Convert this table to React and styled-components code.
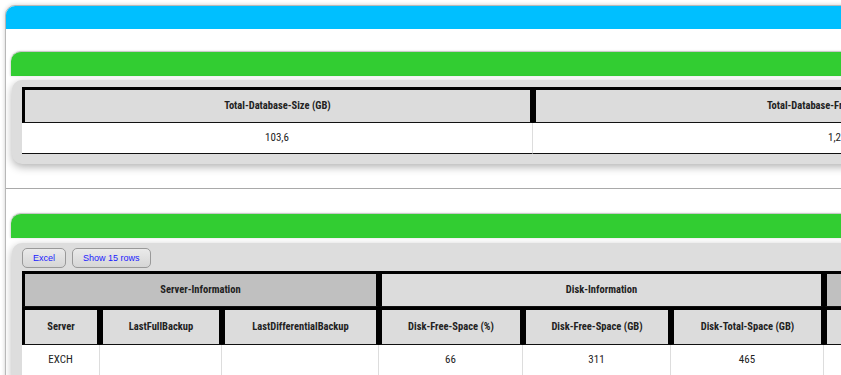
import React from "react";
import styled, { createGlobalStyle } from "styled-components";

const GlobalStyle = createGlobalStyle`
  html, body {
    margin: 0;
    padding: 0;
    background: #fff;
    overflow: hidden;
  }
  body {
    font-family: "Roboto Condensed", "Liberation Sans Narrow", Roboto, sans-serif;
    color: #222;
  }
`;

// report data ------------
const summary = {
  columns: [
    { label: "Total-Database-Size (GB)", width: 511 },
    { label: "Total-Database-Free-Space (GB)", width: 604 },
    { label: "Total-Mailbox-Count", width: 420 },
  ],
  row: ["103,6", "1,2", "12"],
};

const groups = [
  { label: "Server-Information", span: 3, dark: true },
  { label: "Disk-Information", span: 3, dark: false },
  { label: "Database-Information", span: 3, dark: true },
];

const serverColumns = [
  { label: "Server", width: 78 },
  { label: "LastFullBackup", width: 122 },
  { label: "LastDifferentialBackup", width: 157 },
  { label: "Disk-Free-Space (%)", width: 144 },
  { label: "Disk-Free-Space (GB)", width: 148 },
  { label: "Disk-Total-Space (GB)", width: 153 },
  { label: "Database-Count", width: 140 },
  { label: "Database-Size (GB)", width: 150 },
  { label: "Mounted", width: 120 },
];

const serverRows = [["EXCH", "", "", "66", "311", "465", "1", "103,6", "True"]];

function App() {
  return (
    <>
      <GlobalStyle />
      <Page>
        <Report>
          <ReportHeader />

          <Section>
            <Panel>
              <PanelHeader />
              <TableBox $gap={4}>
                <DataTable>
                  <colgroup>
                    {summary.columns.map((c) => (
                      <Col key={c.label} $w={c.width} />
                    ))}
                  </colgroup>
                  <thead>
                    <tr>
                      {summary.columns.map((c) => (
                        <HeadCell key={c.label}>{c.label}</HeadCell>
                      ))}
                    </tr>
                  </thead>
                  <tbody>
                    <tr>
                      {summary.row.map((v, i) => (
                        <Cell key={i}>{v}</Cell>
                      ))}
                    </tr>
                  </tbody>
                </DataTable>
              </TableBox>
            </Panel>
          </Section>

          <Section $divided>
            <Panel>
              <PanelHeader />
              <TableBox $gap={5} $top={5}>
                <Buttons>
                  <TableButton>Excel</TableButton>
                  <TableButton>Show 15 rows</TableButton>
                </Buttons>
                <DataTable>
                  <colgroup>
                    {serverColumns.map((c) => (
                      <Col key={c.label} $w={c.width} />
                    ))}
                  </colgroup>
                  <thead>
                    <tr>
                      {groups.map((g) => (
                        <HeadCell key={g.label} colSpan={g.span} $dark={g.dark}>
                          {g.label}
                        </HeadCell>
                      ))}
                    </tr>
                    <tr>
                      {serverColumns.map((c) => (
                        <HeadCell key={c.label} $sortable>
                          {c.label}
                        </HeadCell>
                      ))}
                    </tr>
                  </thead>
                  <tbody>
                    {serverRows.map((row) => (
                      <tr key={row[0]}>
                        {row.map((v, i) => (
                          <Cell key={i}>{v}</Cell>
                        ))}
                      </tr>
                    ))}
                  </tbody>
                </DataTable>
              </TableBox>
            </Panel>
          </Section>
        </Report>
      </Page>
    </>
  );
}

const Page = styled.div`
  padding: 5px;
  width: 1900px;
`;

const Report = styled.div`
  border: 1px solid #b8b8b8;
  border-radius: 10px 10px 0 0;
  box-shadow: 0 0 4px rgba(0, 0, 0, 0.2);
  background: #fff;
  overflow: hidden;
`;

const ReportHeader = styled.div`
  height: 23px;
  background-color: #00bfff;
`;

const Section = styled.div`
  padding: ${(p) => (p.$divided ? "24px" : "22px")} 0 24px 5px;
  border-top: ${(p) => (p.$divided ? "1px solid #a9a9a9" : "none")};
`;

const Panel = styled.div`
  display: flex;
  flex-direction: column;
`;

const PanelHeader = styled.div`
  height: 24px;
  background-color: #32cd32;
  border-top: 1px solid #c8c8c8;
  border-radius: 10px 10px 0 0;
  box-shadow: -1px 0 2px rgba(0, 0, 0, 0.15);
`;

const TableBox = styled.div`
  margin: ${(p) => p.$gap}px 0 0 1px;
  padding: ${(p) => p.$top || 7}px 10px 10px 10px;
  background-color: #dddddd;
  border-radius: 10px;
  box-shadow: 0 3px 8px rgba(0, 0, 0, 0.3);
`;

const Buttons = styled.div`
  display: flex;
  gap: 6px;
  margin-bottom: 3px;
`;

const TableButton = styled.button`
  height: 20px;
  padding: 0 10px;
  border: 1px solid #999;
  border-radius: 5px;
  background: linear-gradient(to bottom, #eaeaea 0%, #d6d6d6 100%);
  color: #1a1aff;
  font-family: "Liberation Sans", Arial, sans-serif;
  font-size: 9px;
  cursor: pointer;
`;

const DataTable = styled.table`
  table-layout: fixed;
  border-collapse: separate;
  border-spacing: 0;
  background: #fff;
`;

const Col = styled.col`
  width: ${(p) => p.$w}px;
`;

const HeadCell = styled.th`
  padding: ${(p) => (p.$sortable ? "10px" : "9px")} 6px;
  background-color: ${(p) => (p.$dark ? "#c0c0c0" : "#dcdcdc")};
  border: 3px solid #000;
  border-bottom: 1px solid #111;
  font-size: 10.5px;
  font-weight: 700;
  line-height: 14px;
  text-align: center;
  white-space: nowrap;
  overflow: hidden;
`;

const Cell = styled.td`
  padding: 8px 6px;
  border-right: 1px solid #ddd;
  border-bottom: 1px solid #111;
  font-size: 11px;
  line-height: 14px;
  text-align: center;
  white-space: nowrap;
`;

export default App;
